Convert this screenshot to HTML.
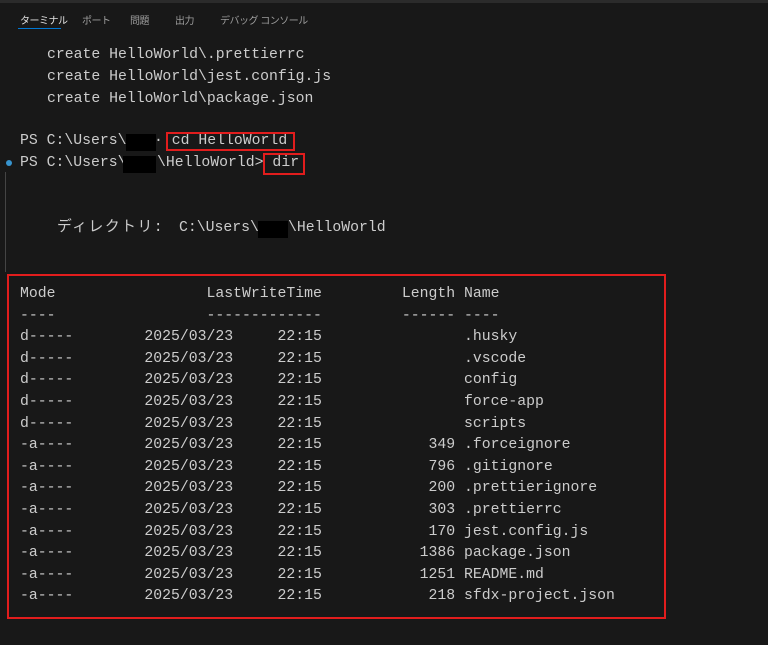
<!DOCTYPE html><html><head><meta charset="utf-8"><style>
body{margin:0;width:768px;height:645px;background:#181818;overflow:hidden;position:relative;font-family:"Liberation Mono","Noto Sans CJK JP",monospace;color:#cccccc}
.tabs{position:absolute;top:12px;left:0;font:10px "Liberation Sans","Noto Sans CJK JP",sans-serif;color:#9d9d9d;letter-spacing:-0.5px}
.tabs span{position:absolute;white-space:nowrap}
.l{position:absolute;left:20px;font-size:14.8px;white-space:pre;line-height:20px}
.box{position:absolute;border:2px solid #e11d1d}
.blk{position:absolute;background:#000}
</style></head><body>
<div style="position:absolute;top:0;left:0;width:768px;height:3px;background:#2b2b2b"></div>
<div class="tabs"><span style="left:20px;color:#e0e0e0">ターミナル</span><span style="left:82px">ポート</span><span style="left:130px">問題</span><span style="left:175px">出力</span><span style="left:220px">デバッグ コンソール</span></div>
<div style="position:absolute;left:18px;top:28px;width:43px;height:1px;background:#0078d4"></div>
<div class="l" style="top:45px;left:47px">create HelloWorld\.prettierrc</div>
<div class="l" style="top:67px;left:47px">create HelloWorld\jest.config.js</div>
<div class="l" style="top:89px;left:47px">create HelloWorld\package.json</div>
<div class="l" style="top:131px">PS C:\Users\</div>
<div class="l" style="top:131px;left:154px">· cd HelloWorld</div>
<div class="l" style="top:153px">PS C:\Users\</div>
<div class="l" style="top:153px;left:157px">\HelloWorld&gt; dir</div>
<div style="position:absolute;left:6px;top:160px;width:6px;height:6px;border-radius:50%;background:#3794ce"></div>
<div style="position:absolute;left:5px;top:172px;width:1px;height:100px;background:#444"></div>
<div class="blk" style="left:126px;top:134px;width:30px;height:17px"></div>
<div class="blk" style="left:123px;top:156px;width:33px;height:17px"></div>
<div class="box" style="left:166px;top:132px;width:125px;height:15px"></div>
<div class="box" style="left:263px;top:153px;width:38px;height:18px"></div>
<div class="l" style="top:218px;left:57px;letter-spacing:1.5px">ディレクトリ:</div>
<div class="l" style="top:218px;left:179px">C:\Users\</div>
<div class="blk" style="left:258px;top:221px;width:30px;height:17px"></div>
<div class="l" style="top:218px;left:288px">\HelloWorld</div>
<div class="box" style="left:7px;top:274px;width:655px;height:341px"></div>
<div class="l" style="top:284px;line-height:21.6px">Mode                 LastWriteTime         Length Name
----                 -------------         ------ ----
d-----        2025/03/23     22:15                .husky
d-----        2025/03/23     22:15                .vscode
d-----        2025/03/23     22:15                config
d-----        2025/03/23     22:15                force-app
d-----        2025/03/23     22:15                scripts
-a----        2025/03/23     22:15            349 .forceignore
-a----        2025/03/23     22:15            796 .gitignore
-a----        2025/03/23     22:15            200 .prettierignore
-a----        2025/03/23     22:15            303 .prettierrc
-a----        2025/03/23     22:15            170 jest.config.js
-a----        2025/03/23     22:15           1386 package.json
-a----        2025/03/23     22:15           1251 README.md
-a----        2025/03/23     22:15            218 sfdx-project.json</div>
</body></html>
